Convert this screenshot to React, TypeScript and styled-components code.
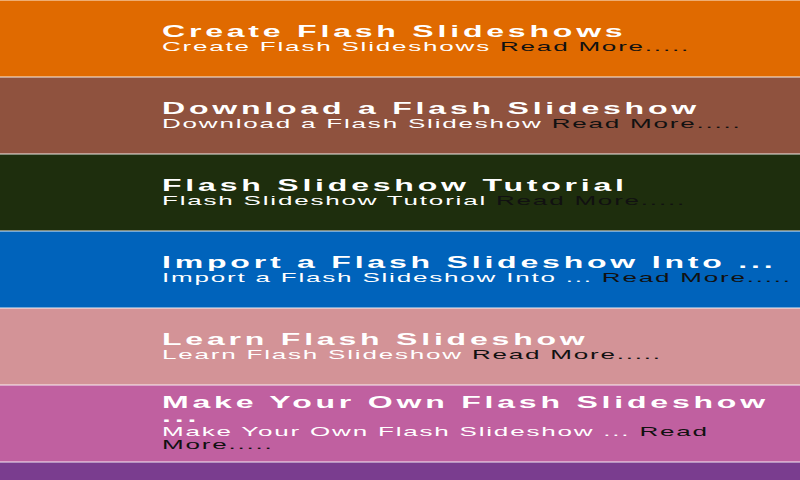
import React from "react";
import styled, { createGlobalStyle } from "styled-components";

const Global = createGlobalStyle`
  html, body { margin: 0; padding: 0; background: #7a3d8f; }
  body { width: 800px; height: 480px; overflow: hidden; font-family: "Liberation Sans", Arial, sans-serif; }
`;

const List = styled.div`
  display: flex;
  flex-direction: column;
  width: 800px;
`;

const Row = styled.div<{ $bg: string }>`
  box-sizing: border-box;
  height: 77px;
  flex: none;
  display: flex;
  align-items: center;
  padding-left: 162px;
  background: ${(p) => p.$bg};
  border-top: 1px solid rgba(255, 255, 255, 0.45);
  border-bottom: 1px solid rgba(255, 255, 255, 0.45);
`;

const TextBlock = styled.div`
  width: 319px;
  transform: scaleX(2);
  transform-origin: left center;
`;

const Title = styled.div`
  font-family: "Liberation Sans", Arial, sans-serif;
  font-weight: 700;
  font-size: 16px;
  line-height: 14px;
  letter-spacing: 1.9px;
  color: #ffffff;
`;

const Sub = styled.div`
  font-family: "Liberation Sans", Arial, sans-serif;
  font-weight: 400;
  font-size: 13px;
  line-height: 13px;
  letter-spacing: 0.9px;
  color: #ffffff;
  margin-top: 1px;
`;

const More = styled.span`
  color: #111111;
`;

const items = [
  { bg: "#e06a00", t: "Create Flash Slideshows" },
  { bg: "#8f523e", t: "Download a Flash Slideshow" },
  { bg: "#1e2e0d", t: "Flash Slideshow Tutorial" },
  { bg: "#0063bb", t: "Import a Flash Slideshow Into ..." },
  { bg: "#d39397", t: "Learn Flash Slideshow" },
  { bg: "#c060a0", t: "Make Your Own Flash Slideshow ..." },
  { bg: "#7a3d8f", t: "" },
];

export default function App() {
  return (
    <>
      <Global />
      <List>
        {items.map((it, i) => (
          <Row key={i} $bg={it.bg}>
            {it.t && (
              <TextBlock>
                <Title>{it.t}</Title>
                <Sub>
                  {it.t} <More>Read More.....</More>
                </Sub>
              </TextBlock>
            )}
          </Row>
        ))}
      </List>
    </>
  );
}
